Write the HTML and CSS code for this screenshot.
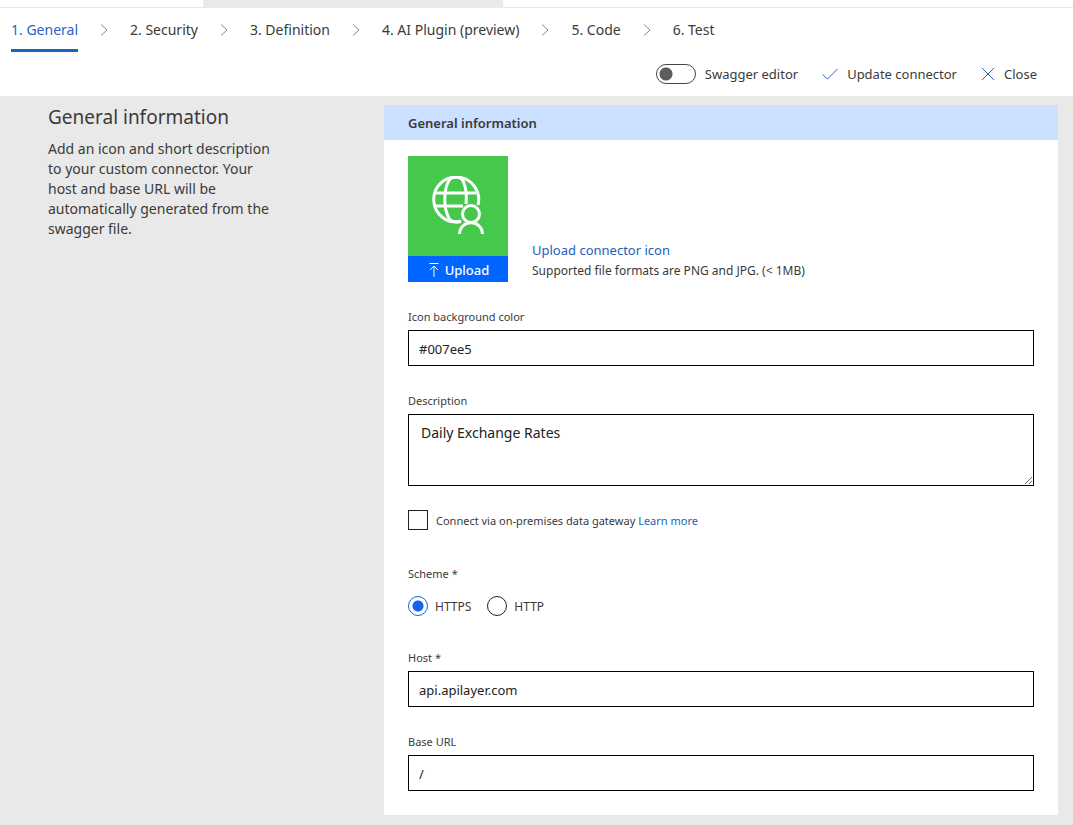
FILE: index.html
```html
<!DOCTYPE html>
<html lang="en">
<head>
	<title>Custom connector</title>
	<meta charset="UTF-8">
	<meta name="viewport" content="width=device-width, initial-scale=1">
	<link rel="stylesheet" href="styles.css">
</head>
<body>

<header>
	<div class="strip"><div class="strip-tab"></div></div>

	<nav class="steps">
		<a class="current" href="#general">1. General</a>
		<svg class="chevron" viewBox="0 0 8 12"><path d="M1 0.5 L7 6 L1 11.5"/></svg>
		<a href="#security">2. Security</a>
		<svg class="chevron" viewBox="0 0 8 12"><path d="M1 0.5 L7 6 L1 11.5"/></svg>
		<a href="#definition">3. Definition</a>
		<svg class="chevron" viewBox="0 0 8 12"><path d="M1 0.5 L7 6 L1 11.5"/></svg>
		<a href="#plugin">4. AI Plugin (preview)</a>
		<svg class="chevron" viewBox="0 0 8 12"><path d="M1 0.5 L7 6 L1 11.5"/></svg>
		<a href="#code">5. Code</a>
		<svg class="chevron" viewBox="0 0 8 12"><path d="M1 0.5 L7 6 L1 11.5"/></svg>
		<a href="#test">6. Test</a>
	</nav>

	<div class="commands">
		<label class="command"><input class="toggle" type="checkbox" role="switch">Swagger editor</label>
		<button class="command" type="button">
			<svg width="16" height="12" viewBox="0 0 16 12"><path d="M0.5 6.5 L5.5 11 L15.5 1"/></svg>Update connector
		</button>
		<button class="command" type="button">
			<svg width="14" height="14" viewBox="0 0 14 14"><path d="M1 1 L13 13 M13 1 L1 13"/></svg>Close
		</button>
	</div>
</header>

<main>
	<aside>
		<h1>General information</h1>
		<p>Add an icon and short description to your custom connector. Your host and base URL will be automatically generated from the swagger file.</p>
	</aside>

	<section class="panel">
		<h2>General information</h2>
		<form>
			<div class="upload">
				<div class="tile">
					<div class="tile-icon">
						<svg width="54" height="60" viewBox="0 0 54 60">
							<path d="M47 29 A22.500 22.500 0 1 0 30 45.500"/>
							<path d="M4 17 H45 M4 30 H32"/>
							<path d="M19 44 C12 33 12 13 19 3 Q25 -1 31 3 C35 10 36 18 35 28 M19 44 Q24 47 30 45"/>
							<circle cx="40" cy="38" r="8.500"/>
							<path d="M28.500 58 C29 43 51 43 51.500 58"/>
						</svg>
					</div>
					<button class="tile-button" type="button">
						<svg width="10" height="14" viewBox="0 0 10 14"><path d="M0.500 0.500 H9.500 M5 14 V3 M1 7 L5 3 L9 7"/></svg>Upload
					</button>
				</div>
				<div class="upload-text">
					<a href="#upload">Upload connector icon</a>
					<div>Supported file formats are PNG and JPG. (&lt; 1MB)</div>
				</div>
			</div>

			<div class="field">
				<label for="color">Icon background color</label>
				<input id="color" type="text" value="#007ee5">
			</div>

			<div class="field">
				<label for="description">Description</label>
				<textarea id="description">Daily Exchange Rates</textarea>
			</div>

			<div class="gateway">
				<input id="gateway" type="checkbox">
				<span><label for="gateway">Connect via on-premises data gateway</label> <a href="#learn">Learn more</a></span>
			</div>

			<fieldset>
				<legend>Scheme *</legend>
				<div class="radios">
					<label><input type="radio" name="scheme" checked>HTTPS</label>
					<label><input type="radio" name="scheme">HTTP</label>
				</div>
			</fieldset>

			<div class="field">
				<label for="host">Host *</label>
				<input id="host" type="text" value="api.apilayer.com">
			</div>

			<div class="field">
				<label for="base">Base URL</label>
				<input id="base" type="text" value="/">
			</div>
		</form>
	</section>
</main>

</body>
</html>
```

FILE: styles.css
```css
* { box-sizing:border-box; }
body
{
	margin:0;
	background:#e9e9e9;
	color:#3a3a3a;
	font-family:"Segoe UI", "Noto Sans", "Open Sans", sans-serif;
	font-size:14px;
	line-height:20px;
}
a
{
	color:#1c5fb8;
	text-decoration:none;
}
button, input, textarea
{
	font:inherit;
	color:inherit;
	margin:0;
}
button
{
	border:0;
	padding:0;
	background:none;
	cursor:pointer;
}
svg
{
	fill:none;
	stroke:currentColor;
	flex:none;
}

header
{
	background:white;
	padding-bottom:12px;
}
.strip
{
	height:8px;
	border-bottom:1px solid #e6e6e6;
}
.strip-tab
{
	width:300px;
	height:8px;
	margin-left:203px;
	background:#e9e9e9;
}
.steps
{
	display:flex;
	align-items:center;
	gap:22px;
	padding:0 11px;
	height:44px;
}
.steps a
{
	color:#3a3a3a;
	height:44px;
	line-height:44px;
	white-space:nowrap;
}
.steps .current
{
	color:#2c62c9;
	border-bottom:3px solid #1664c0;
}
.chevron
{
	width:8px;
	height:12px;
	color:#888;
}
.commands
{
	display:flex;
	justify-content:flex-end;
	gap:24px;
	height:32px;
	padding:12px 36px 0 0;
	font-size:13px;
}
.command
{
	display:flex;
	align-items:center;
	gap:9px;
	height:20px;
}
.command svg { color:#2f62c4; }
.toggle
{
	appearance:none;
	width:40px;
	height:20px;
	border:1px solid #444;
	border-radius:10px;
	background:radial-gradient(circle at 9px 9px, #5c5c5c 6px, transparent 7px);
}

main
{
	display:grid;
	grid-template-columns:384px 1fr;
	padding:9px 15px 10px 0;
}
aside { padding-left:48px; }
aside h1
{
	margin:0 0 10px;
	font-size:19px;
	line-height:24px;
	font-weight:400;
}
aside p
{
	margin:0;
	max-width:230px;
}
.panel { background:white; }
.panel h2
{
	margin:0;
	padding:1px 24px 0;
	background:#cce0ff;
	font-size:13px;
	line-height:34px;
	font-weight:600;
}
form
{
	display:flex;
	flex-direction:column;
	gap:24px;
	padding:16px 24px 24px;
	font-size:12px;
}

.upload
{
	display:flex;
	align-items:flex-end;
	gap:24px;
}
.tile { width:100px; }
.tile-icon
{
	display:flex;
	align-items:center;
	justify-content:center;
	height:100px;
	background:#45c84c;
	color:white;
}
.tile-icon svg { stroke-width:3; }
.tile-button
{
	display:flex;
	align-items:center;
	justify-content:center;
	gap:6px;
	width:100%;
	height:26px;
	padding:2px 0 0 2px;
	background:#0066ff;
	color:white;
	font-size:13px;
	font-weight:500;
}
.upload-text { padding-bottom:1px; }
.upload-text a { font-size:13px; }

.field
{
	display:flex;
	flex-direction:column;
	gap:2px;
}
.field label, legend
{
	font-size:11px;
	line-height:22px;
	padding:0;
}
.field input, .field textarea
{
	display:block;
	width:100%;
	border:1px solid black;
	border-radius:0;
	background:white;
	color:#222;
}
.field input
{
	height:36px;
	padding:2px 10px 0;
	font-size:13px;
}
.field textarea
{
	height:72px;
	padding:8px 12px;
	font-size:14px;
	resize:vertical;
}

.gateway
{
	display:flex;
	gap:8px;
	height:20px;
	font-size:11px;
	line-height:22px;
}
.gateway input, .radios input
{
	appearance:none;
	width:20px;
	height:20px;
	border:1px solid #222;
	background:white;
}
fieldset
{
	border:0;
	padding:0;
	margin:9px 0 7px;
}
.radios
{
	display:flex;
	gap:16px;
	height:31px;
	padding-top:11px;
	line-height:22px;
}
.radios label
{
	display:flex;
	gap:7px;
}
.radios input { border-radius:50%; }
.radios input:checked
{
	border-color:#1560e0;
	background:radial-gradient(circle, #1163f0 5px, white 6px);
}
```
